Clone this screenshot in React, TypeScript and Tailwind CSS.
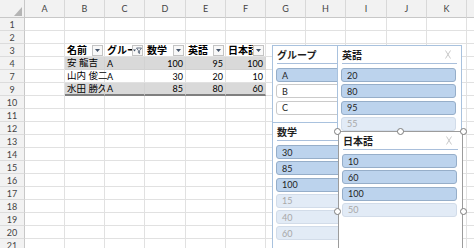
import React from 'react';

type ItemState = 'sel' | 'on' | 'off';

const COLS = [
  { n: 'A', w: 40 },
  { n: 'B', w: 40 },
  { n: 'C', w: 40 },
  { n: 'D', w: 41 },
  { n: 'E', w: 40 },
  { n: 'F', w: 40 },
  { n: 'G', w: 40 },
  { n: 'H', w: 40 },
  { n: 'I', w: 41 },
  { n: 'J', w: 40 },
  { n: 'K', w: 40 },
  { n: 'L', w: 40 },
];

const ROWS = ['1', '2', '3', '4', '7', '9', '10', '11', '12', '13', '14', '15', '16', '17', '18', '19', '20', '21'];

const HEAD = ['名前', 'グループ', '数学', '英語', '日本語'];
const DATA: Record<string, { cells: string[]; gray: boolean }> = {
  '4': { cells: ['安 龍吉', 'A', '100', '95', '100'], gray: true },
  '7': { cells: ['山内 俊二', 'A', '30', '20', '10'], gray: false },
  '9': { cells: ['水田 勝久', 'A', '85', '80', '60'], gray: true },
};

const DropBtn = ({ filtered }: { filtered?: boolean }) => (
  <div className="shrink-0 w-[11px] h-[11px] mr-[1px] border border-[#c4c4c4] bg-[#f8f8f8] flex items-center justify-center">
    {filtered ? (
      <svg width="9" height="7" viewBox="0 0 9 7">
        <path d="M0 2.5h3L1.5 4.5z" fill="#44546a" />
        <path d="M3.5 1h5L6.6 3.6V6.5L5.4 5.8V3.6z" fill="none" stroke="#44546a" strokeWidth="0.8" />
      </svg>
    ) : (
      <svg width="5" height="3" viewBox="0 0 5 3">
        <path d="M0 0h5L2.5 3z" fill="#44546a" />
      </svg>
    )}
  </div>
);

const ClearIcon = () => (
  <svg width="6" height="9" viewBox="0 0 6 9" className="shrink-0">
    <path d="M0.5 0.5L5.5 8.5M5.5 0.5L0.5 8.5" stroke="#c2c2c2" strokeWidth="0.9" />
  </svg>
);

function TableCell({ row, col }: { row: string; col: number }) {
  // col: 1..5 for B..F
  if (row === '3') {
    return (
      <div className="flex items-center h-full bg-white">
        <span className="flex-1 min-w-0 overflow-hidden whitespace-nowrap pl-[2px] text-[10px] font-bold text-black leading-none">
          {HEAD[col - 1]}
        </span>
        <DropBtn filtered={col === 2} />
      </div>
    );
  }
  const d = DATA[row];
  const text = d.cells[col - 1];
  const isNum = col >= 3;
  return (
    <div
      className={`flex items-center h-full whitespace-nowrap text-black leading-none ${
        isNum ? 'justify-end pr-[2px] text-[9px]' : 'pl-[2px]'
      } ${col === 1 ? 'text-[9.5px]' : ''} ${col === 2 ? 'text-[9px]' : ''}`}
    >
      {text}
    </div>
  );
}

function Slicer({
  title,
  items,
  className,
  active,
  clear,
}: {
  title: string;
  items: [string, ItemState][];
  className: string;
  active?: boolean;
  clear?: boolean;
}) {
  return (
    <div className={`absolute bg-white border ${active ? 'border-[#9c9c9c]' : 'border-[#a9c2de]'} ${className}`}>
      <div className="h-[17px] flex items-center justify-between pl-[4px] pr-[10px]">
        <span className="text-[10px] font-bold text-[#1e1e1e] leading-none">{title}</span>
        {clear && <ClearIcon />}
      </div>
      <div className="mx-[4px] border-t border-[#a9bfdb]" />
      <div className="flex flex-col gap-[2.3px] pt-[4px] pl-[3px] pr-[5px]">
        {items.map(([label, st]) => (
          <div
            key={label}
            className={`h-[14px] rounded-[3px] border flex items-center pl-[5px] text-[9px] leading-none ${
              st === 'sel'
                ? 'bg-[#bcd3ed] border-[#96aec9] text-[#1e1e1e]'
                : st === 'on'
                ? 'bg-white border-[#cacaca] text-[#1e1e1e]'
                : 'bg-[#e2ebf6] border-[#d2dce9] text-[#a8a8a8]'
            }`}
          >
            {label}
          </div>
        ))}
      </div>
    </div>
  );
}

const Handle = ({ className }: { className: string }) => (
  <div className={`absolute w-[7px] h-[7px] rounded-full bg-white border border-[#7c7c7c] z-50 ${className}`} />
);

export default function App() {
  return (
    <div className="relative w-[474px] h-[248px] overflow-hidden bg-white font-[family-name:Lato,'Noto_Sans_CJK_JP',sans-serif]">
      {/* column headers */}
      <div className="flex h-[18px]">
        <div className="relative shrink-0 w-[25px] h-full bg-[#f2f2f2] border-r border-b border-[#c8c8c8]">
          <svg width="8" height="9" viewBox="0 0 8 9" className="absolute right-[2px] bottom-[1px]">
            <path d="M8 0V9H0z" fill="#b5b5b5" />
          </svg>
        </div>
        {COLS.map((c) => (
          <div
            key={c.n}
            style={{ width: c.w }}
            className="shrink-0 h-full bg-[#f2f2f2] border-r border-[#d8d8d8] border-b border-b-[#c8c8c8] flex items-center justify-center text-[9px] text-[#444]"
          >
            {c.n === 'L' ? '' : c.n}
          </div>
        ))}
      </div>

      {/* rows */}
      {ROWS.map((r) => {
        const inTable = r === '3' || !!DATA[r];
        const gray = DATA[r]?.gray;
        return (
          <div key={r} className="flex h-[13px]">
            <div className="shrink-0 w-[25px] h-full bg-[#f2f2f2] border-r border-[#c8c8c8] border-b border-b-[#dcdcdc] flex items-center justify-center text-[9px] text-[#444] leading-none">
              {r}
            </div>
            {COLS.map((c, ci) => {
              const tableCol = inTable && ci >= 1 && ci <= 5;
              return (
                <div
                  key={c.n}
                  style={{ width: c.w }}
                  className={`shrink-0 h-full overflow-visible border-r ${
                    tableCol && gray ? 'bg-[#d9d9d9] border-[#d2d2d2]' : 'border-[#e1e1e1]'
                  } ${
                    tableCol && r === '9' ? 'border-b-2 border-b-[#7f7f7f]' : 'border-b'
                  }`}
                >
                  {tableCol && <TableCell row={r} col={ci} />}
                </div>
              );
            })}
          </div>
        );
      })}

      {/* slicers */}
      <Slicer
        title="グループ"
        className="left-[272px] top-[45px] w-[130px] h-[190px] z-10"
        items={[
          ['A', 'sel'],
          ['B', 'on'],
          ['C', 'on'],
        ]}
      />
      <Slicer
        title="数学"
        className="left-[272px] top-[122px] w-[130px] h-[190px] z-20"
        items={[
          ['30', 'sel'],
          ['85', 'sel'],
          ['100', 'sel'],
          ['15', 'off'],
          ['40', 'off'],
          ['60', 'off'],
        ]}
      />
      <Slicer
        title="英語"
        clear
        className="left-[337px] top-[45px] w-[125px] h-[90px] z-30"
        items={[
          ['20', 'sel'],
          ['80', 'sel'],
          ['95', 'sel'],
          ['55', 'off'],
        ]}
      />
      <Slicer
        title="日本語"
        clear
        active
        className="left-[338px] top-[131px] w-[125px] h-[160px] z-40"
        items={[
          ['10', 'sel'],
          ['60', 'sel'],
          ['100', 'sel'],
          ['50', 'off'],
        ]}
      />
      <Handle className="left-[334px] top-[128px]" />
      <Handle className="left-[397px] top-[128px]" />
      <Handle className="left-[460px] top-[128px]" />
      <Handle className="left-[334px] top-[208px]" />
      <Handle className="left-[460px] top-[208px]" />
    </div>
  );
}
